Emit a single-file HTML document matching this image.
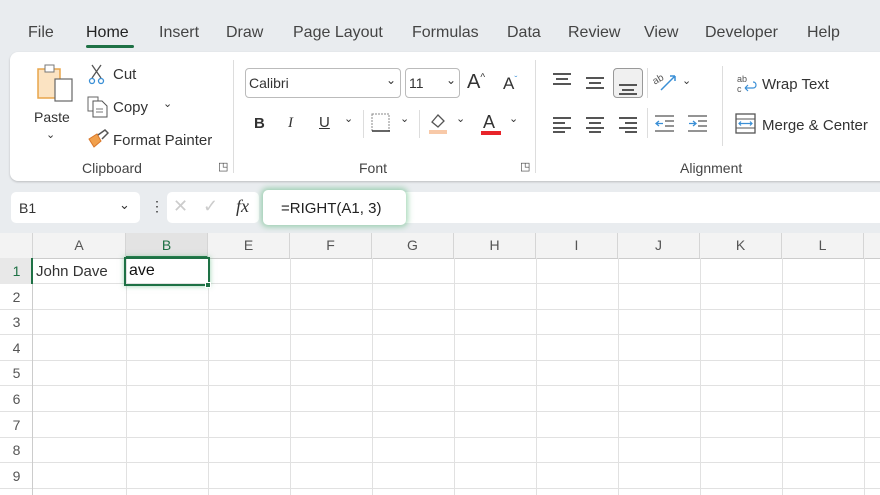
<!DOCTYPE html>
<html><head><style>
*{box-sizing:border-box;margin:0;padding:0}
body{width:880px;height:495px;overflow:hidden;background:#e9ecef;font-family:"Liberation Sans",sans-serif;color:#333;position:relative}
.a{position:absolute}
.menu span{position:absolute;top:24px;font-size:16px;color:#444}
.t{font-size:15px;color:#333;position:absolute}
.gl{font-size:13px;color:#444;position:absolute}
.box{position:absolute;background:#fff;border:1px solid #bbb;border-radius:4px}
.hl{position:absolute;height:1.5px;background:#555}
.col{position:absolute;top:233px;height:25px;border-right:1px solid #d5d5d5;font-size:14px;color:#555;text-align:center;line-height:25px;background:#f3f3f3}
.row{position:absolute;left:0;width:33px;height:26px;font-size:14px;color:#555;text-align:center;line-height:26px}
</style></head><body>
<div class="menu">
<span style="left:28px">File</span>
<span style="left:86px;color:#222">Home</span>
<span style="left:159px">Insert</span>
<span style="left:226px">Draw</span>
<span style="left:293px">Page Layout</span>
<span style="left:412px">Formulas</span>
<span style="left:507px">Data</span>
<span style="left:568px">Review</span>
<span style="left:644px">View</span>
<span style="left:705px">Developer</span>
<span style="left:807px">Help</span>
</div>
<div class="a" style="left:86px;top:45px;width:48px;height:3px;background:#1e7145;border-radius:2px"></div>
<div class="a" style="left:10px;top:52px;width:880px;height:129px;background:#fff;border-radius:8px;box-shadow:0 1px 2px rgba(0,0,0,.2)"></div>
<!-- clipboard -->
<svg class="a" style="left:36px;top:63px" width="38" height="40"><rect x="2" y="6" width="22" height="29" fill="#fbe3c2" stroke="#e8a54b" stroke-width="1.5"/><rect x="9" y="2" width="9" height="7" fill="#fff" stroke="#777"/><rect x="19" y="16" width="17" height="22" fill="#fff" stroke="#666" stroke-width="1.2"/></svg>
<div class="t" style="left:34px;top:109px;font-size:14px">Paste</div>
<div class="t" style="left:46px;top:128px;font-size:11px">⌄</div>
<svg class="a" style="left:88px;top:63px" width="18" height="22"><path d="M4 2l9 13M13 2L4 15" stroke="#555" fill="none" stroke-width="1.3"/><circle cx="4" cy="18" r="2.5" fill="none" stroke="#3a8fd6" stroke-width="1.3"/><circle cx="13" cy="18" r="2.5" fill="none" stroke="#3a8fd6" stroke-width="1.3"/></svg>
<div class="t" style="left:113px;top:66px">Cut</div>
<svg class="a" style="left:87px;top:96px" width="22" height="22"><rect x="1" y="1" width="10" height="14" fill="none" stroke="#666"/><path d="M6 5h9l5 5v11H6z" fill="#fff" stroke="#555"/><path d="M9 13h7M9 16h7" stroke="#777"/></svg>
<div class="t" style="left:113px;top:99px">Copy</div>
<div class="t" style="left:163px;top:97px;font-size:11px">⌄</div>
<svg class="a" style="left:87px;top:129px" width="22" height="20"><path d="M2 10l8-5 4 7-7 6z" fill="#f1a04c" stroke="#d9772a"/><path d="M11 6l7-5 3 3-6 6" fill="none" stroke="#555" stroke-width="1.5"/></svg>
<div class="t" style="left:113px;top:132px">Format Painter</div>
<div class="gl" style="left:82px;top:160px;font-size:14px">Clipboard</div>
<div class="gl" style="left:218px;top:160px;font-size:11px">◳</div>
<div class="a" style="left:233px;top:60px;width:1px;height:113px;background:#ddd"></div>
<!-- font -->
<div class="box" style="left:245px;top:68px;width:156px;height:30px"><span class="t" style="left:3px;top:6px;font-size:14px">Calibri</span><span class="t" style="left:140px;top:4px;font-size:12px">⌄</span></div>
<div class="box" style="left:405px;top:68px;width:55px;height:30px"><span class="t" style="left:3px;top:6px;font-size:14px">11</span><span class="t" style="left:40px;top:4px;font-size:12px">⌄</span></div>
<div class="t" style="left:467px;top:71px;font-size:20px">A<sup style="font-size:10px">^</sup></div>
<div class="t" style="left:503px;top:74px;font-size:17px">A<sup style="font-size:9px;color:#3a8fd6">ˇ</sup></div>
<div class="t" style="left:254px;top:115px;font-weight:bold">B</div>
<div class="t" style="left:288px;top:115px;font-style:italic;font-family:'Liberation Serif'">I</div>
<div class="t" style="left:319px;top:114px;text-decoration:underline">U</div>
<div class="t" style="left:344px;top:112px;font-size:11px">⌄</div>
<div class="a" style="left:363px;top:110px;width:1px;height:28px;background:#ddd"></div>
<svg class="a" style="left:371px;top:113px" width="20" height="20"><rect x="1" y="1" width="17" height="17" fill="none" stroke="#888" stroke-dasharray="2 1"/><path d="M1 18h18" stroke="#333" stroke-width="1.5"/></svg>
<div class="t" style="left:400px;top:112px;font-size:11px">⌄</div>
<div class="a" style="left:419px;top:110px;width:1px;height:28px;background:#ddd"></div>
<svg class="a" style="left:428px;top:111px" width="22" height="24"><path d="M4 11l6-7 6 6-6 6z" fill="none" stroke="#555" stroke-width="1.3"/><rect x="1" y="19" width="18" height="4" fill="#f8c9a8"/></svg>
<div class="t" style="left:456px;top:112px;font-size:11px">⌄</div>
<div class="t" style="left:483px;top:112px;font-size:18px">A</div>
<div class="a" style="left:481px;top:131px;width:20px;height:4px;background:#e8242a"></div>
<div class="t" style="left:509px;top:112px;font-size:11px">⌄</div>
<div class="gl" style="left:359px;top:160px;font-size:14px">Font</div>
<div class="gl" style="left:520px;top:160px;font-size:11px">◳</div>
<div class="a" style="left:535px;top:60px;width:1px;height:113px;background:#ddd"></div>
<!-- alignment -->
<div class="hl" style="left:553px;top:73px;width:18px"></div><div class="hl" style="left:556px;top:78px;width:12px"></div><div class="hl" style="left:553px;top:83px;width:18px"></div>
<div class="hl" style="left:586px;top:77px;width:18px"></div><div class="hl" style="left:589px;top:82px;width:12px"></div><div class="hl" style="left:586px;top:87px;width:18px"></div>
<div class="a" style="left:613px;top:68px;width:30px;height:30px;border:1px solid #999;border-radius:4px;background:#f0f0f0"></div>
<div class="hl" style="left:619px;top:84px;width:18px"></div><div class="hl" style="left:622px;top:89px;width:12px"></div><div class="hl" style="left:619px;top:93px;width:18px"></div>
<div class="a" style="left:647px;top:68px;width:1px;height:30px;background:#ddd"></div>
<svg class="a" style="left:653px;top:70px" width="26" height="22"><text x="0" y="12" font-size="10" fill="#555" transform="rotate(-30 6 10)">ab</text><path d="M8 20L22 6M22 6h-5M22 6v5" stroke="#3a8fd6" fill="none" stroke-width="1.5"/></svg>
<div class="t" style="left:682px;top:74px;font-size:11px">⌄</div>
<div class="hl" style="left:553px;top:117px;width:18px"></div><div class="hl" style="left:553px;top:122px;width:12px"></div><div class="hl" style="left:553px;top:127px;width:18px"></div><div class="hl" style="left:553px;top:131px;width:12px"></div>
<div class="hl" style="left:586px;top:117px;width:18px"></div><div class="hl" style="left:589px;top:122px;width:12px"></div><div class="hl" style="left:586px;top:127px;width:18px"></div><div class="hl" style="left:589px;top:131px;width:12px"></div>
<div class="hl" style="left:619px;top:117px;width:18px"></div><div class="hl" style="left:625px;top:122px;width:12px"></div><div class="hl" style="left:619px;top:127px;width:18px"></div><div class="hl" style="left:625px;top:131px;width:12px"></div>
<div class="a" style="left:647px;top:108px;width:1px;height:30px;background:#ddd"></div>
<svg class="a" style="left:655px;top:114px" width="20" height="20"><path d="M0 2h19M10 7h9M10 12h9M0 17h19" stroke="#555" stroke-width="1.3"/><path d="M8 9.5H1M4 7l-3 2.5 3 2.5" stroke="#3a8fd6" fill="none" stroke-width="1.3"/></svg>
<svg class="a" style="left:688px;top:114px" width="20" height="20"><path d="M0 2h19M10 7h9M10 12h9M0 17h19" stroke="#555" stroke-width="1.3"/><path d="M1 9.5h7M5 7l3 2.5-3 2.5" stroke="#3a8fd6" fill="none" stroke-width="1.3"/></svg>
<div class="a" style="left:722px;top:66px;width:1px;height:80px;background:#ddd"></div>
<svg class="a" style="left:737px;top:73px" width="22" height="22"><text x="0" y="9" font-size="9" fill="#555">ab</text><text x="0" y="19" font-size="9" fill="#555">c</text><path d="M8 15h8c4 0 4-6 0-6M8 15l3-3M8 15l3 3" stroke="#3a8fd6" fill="none" stroke-width="1.2"/></svg>
<div class="t" style="left:762px;top:76px">Wrap Text</div>
<svg class="a" style="left:735px;top:113px" width="22" height="22"><rect x="1" y="1" width="19" height="19" fill="none" stroke="#555" stroke-width="1.3"/><path d="M1 6h19M1 15h19" stroke="#555"/><path d="M4 10.5h13M6 8.5l-2 2 2 2M15 8.5l2 2-2 2" stroke="#3a8fd6" fill="none" stroke-width="1.2"/></svg>
<div class="t" style="left:762px;top:117px">Merge &amp; Center</div>
<div class="gl" style="left:680px;top:160px;font-size:14px">Alignment</div>
<!-- formula bar -->
<div class="a" style="left:11px;top:192px;width:129px;height:31px;background:#fff;border-radius:5px"><span class="t" style="left:8px;top:8px;font-size:14px">B1</span><span class="t" style="left:108px;top:5px;font-size:13px">⌄</span></div>
<div class="t" style="left:150px;top:198px;font-size:14px">⋮</div>
<div class="a" style="left:167px;top:192px;width:92px;height:31px;background:#fff;border-radius:5px"></div>
<div class="t" style="left:173px;top:196px;font-size:18px;color:#ccc">✕</div>
<div class="t" style="left:203px;top:196px;font-size:18px;color:#ccc">✓</div>
<div class="t" style="left:236px;top:196px;font-size:18px;font-style:italic;font-family:'Liberation Serif'">fx</div>
<div class="a" style="left:267px;top:192px;width:613px;height:31px;background:#fff;border-radius:5px 0 0 5px"></div>
<div class="a" style="left:263px;top:190px;width:143px;height:35px;border-radius:5px;box-shadow:0 0 6px 2px rgba(60,170,100,.45);background:#fff"></div>
<div class="t" style="left:281px;top:200px;font-size:15px;color:#222">=RIGHT(A1, 3)</div>
<!-- grid -->
<div class="a" style="left:0;top:233px;width:880px;height:262px;background:#fff"></div>
<div class="a" style="left:0;top:233px;width:33px;height:25px;background:#f3f3f3;border-right:1px solid #d5d5d5"></div>
<div class="col" style="left:33px;width:93px">A</div>
<div class="col" style="left:126px;width:82px;background:#e3e3e3;color:#1e7145;border-bottom:2px solid #1e7145">B</div>
<div class="col" style="left:208px;width:82px">E</div>
<div class="col" style="left:290px;width:82px">F</div>
<div class="col" style="left:372px;width:82px">G</div>
<div class="col" style="left:454px;width:82px">H</div>
<div class="col" style="left:536px;width:82px">I</div>
<div class="col" style="left:618px;width:82px">J</div>
<div class="col" style="left:700px;width:82px">K</div>
<div class="col" style="left:782px;width:82px">L</div>
<div class="col" style="left:864px;width:30px"></div>
<div class="a" style="left:0;top:258px;width:880px;height:1px;background:#ccc"></div>
<svg class="a" style="left:0;top:258px" width="880" height="237">
<g stroke="#e1e1e1" stroke-width="1">
<path d="M0 25.5h880M0 51.5h880M0 76.5h880M0 102.5h880M0 127.5h880M0 153.5h880M0 179.5h880M0 204.5h880M0 230.5h880"/>
<path d="M126.5 0v237M208.5 0v237M290.5 0v237M372.5 0v237M454.5 0v237M536.5 0v237M618.5 0v237M700.5 0v237M782.5 0v237M864.5 0v237"/>
</g>
<path d="M32.5 0v237" stroke="#ccc"/>
</svg>
<div class="a" style="left:0;top:258px;width:32px;height:26px;background:#e8e8e8"></div>
<div class="row" style="top:258px;color:#1e7145">1</div>
<div class="row" style="top:284px">2</div>
<div class="row" style="top:309px">3</div>
<div class="row" style="top:335px">4</div>
<div class="row" style="top:360px">5</div>
<div class="row" style="top:386px">6</div>
<div class="row" style="top:412px">7</div>
<div class="row" style="top:437px">8</div>
<div class="row" style="top:463px">9</div>
<div class="a" style="left:31px;top:258px;width:2px;height:26px;background:#1e7145"></div>
<div class="t" style="left:36px;top:263px">John Dave</div>
<div class="a" style="left:124px;top:257px;width:86px;height:29px;border:2px solid #1e7145;box-shadow:0 0 5px rgba(60,170,100,.5)"></div>
<div class="a" style="left:205px;top:282px;width:6px;height:6px;background:#1e7145;border:1px solid #fff"></div>
<div class="t" style="left:129px;top:262px;font-size:16px;color:#111">ave</div>
</body></html>
